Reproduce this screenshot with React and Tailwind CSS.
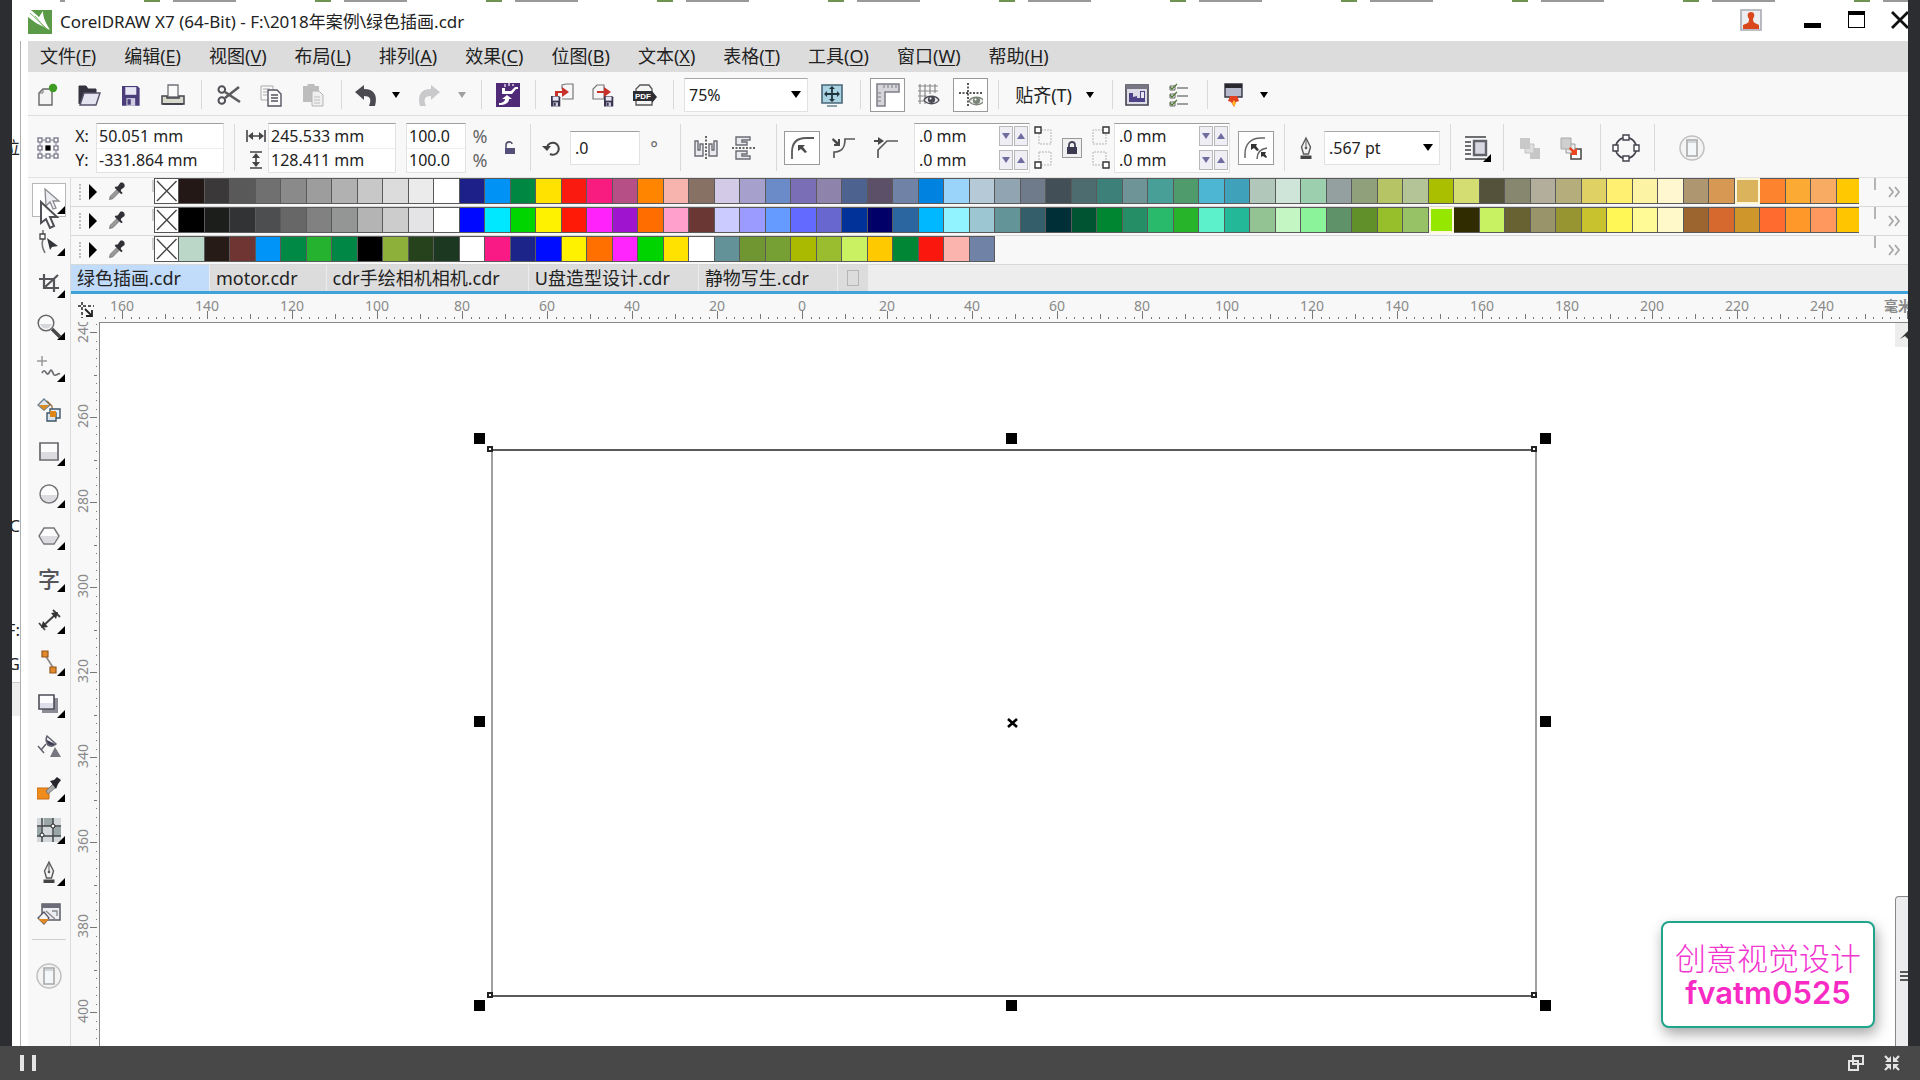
import React from "react";

const FONT = "font-['Noto_Sans','Noto_Sans_CJK_SC',sans-serif]";

/* ---------- data ---------- */

const MENUS = [
  ["文件", "F"], ["编辑", "E"], ["视图", "V"], ["布局", "L"], ["排列", "A"], ["效果", "C"],
  ["位图", "B"], ["文本", "X"], ["表格", "T"], ["工具", "O"], ["窗口", "W"], ["帮助", "H"],
];

const TABS = ["绿色插画.cdr", "motor.cdr", "cdr手绘相机相机.cdr", "U盘造型设计.cdr", "静物写生.cdr"];

const PALETTES = [
  {
    selected: 61,
    colors:
      "231815 3a3838 595959 707070 8a8a8a 9c9d9c b1b1b1 c8c8c8 dcdcdc ebebeb ffffff 1d2088 0093f5 008742 ffe200 fa1a0f f81b80 b54f86 ff8500 f7b4ae 877064 d2cae7 a6a0cd 6a8bc8 7a6fb6 8e84ab 4d628f 5b5068 7082a6 0082e0 9bd4fa b6c9d6 90a4b2 6f7b8a 434f57 4d6c70 3d7f79 6e9497 489f98 4f9b6b 4db6d2 3fa2ba b0c7b9 cfe5da 9ccfae 949fa0 8fa07a b7c466 b5c497 a9bf00 d3dd72 55523c 87866f b3ae9b b5ae7c dfd163 fff071 fcf3a5 fff7d0 ae9770 d79853 dcb35d fe832f fbaa33 f8ab62 ffc800",
  },
  {
    selected: 49,
    colors:
      "000000 1c1e1b 323334 4c4e4f 676767 808180 949696 b3b4b3 cccccc e4e4e6 ffffff 0008ff 00e8ff 00d500 fff200 ff1a08 ff22fb 9e14cf ff6c00 ff9fcb 6b3735 cbcbff 9b9aff 659aff 636aff 6867cf 003299 000068 2b66a1 00b8ff 91f3ff 9bc6d2 639498 345e69 002f38 005432 008631 268e66 29bb6b 27b42b 5cf0cb 23b898 93c393 c4f6c4 8bf49b 5f9268 618f2a 97bf2c 97c265 95e700 302c00 c9f262 686232 99946a 979532 c7c22e fff756 fff996 fff8c8 9c642f d66a2e ce962b ff6b2e ff9829 ff985f ffc600",
  },
  {
    selected: -1,
    colors:
      "bbd7c8 261b16 6f3532 0093f8 008845 25b32f 008745 000000 8db03b 25421d 1d3820 ffffff fa1a86 1c2389 000cff fff200 ff7000 ff25fc 00d400 ffe200 ffffff 639399 6f9630 769f34 aaba00 9abd2f caf161 ffc900 008634 fa170e fbb4ae 7083a7",
  },
];

/* ---------- icons ---------- */

const D = "#6a6a80";

function Svg({ children, size = "h-6 w-6", box = "0 0 24 24" }) {
  return (
    <svg viewBox={box} className={`${size} shrink-0`} fill="none" aria-hidden="true">
      {children}
    </svg>
  );
}

const floppy = (x, y, s, c = "#4a3d7a") => (
  <g transform={`translate(${x} ${y}) scale(${s})`}>
    <path d="M0 0h14l2 2v16H0z" fill={c} />
    <path d="M3 1h10v7H3z" fill="#e9e6f3" />
    <path d="M4 11h8v7H4z" fill="#cfcbe0" />
    <path d="M5 12h3v5H5z" fill={c} />
  </g>
);

const nib = (
  <>
    <path d="M12 2l4.5 9-2 7h-5l-2-7z" fill="#f2f2f2" stroke="#5a5a5a" strokeWidth="1.4" />
    <path d="M12 4v8" stroke="#5a5a5a" strokeWidth="1" />
    <circle cx="12" cy="12" r="1.3" fill="#5a5a5a" />
    <path d="M6.5 19.5h11V23h-11z" fill="#444" />
  </>
);

const dropper = (
  <>
    <path d="M3 21l1-4 9-9 3 3-9 9z" fill="#9a9a9a" stroke="#6e6e6e" />
    <path d="M11 6l2-1 3-4c3-1 6 1 5 5l-4 3-1 3z" fill="#303036" />
    <path d="M10 6l8 8" stroke="#303036" strokeWidth="2.4" />
  </>
);

const eye = (x, y, c = "#4a4a52") => (
  <g transform={`translate(${x} ${y})`}>
    <path d="M0 6c3-5 12-5 15 0-3 5-12 5-15 0z" fill="#eee" stroke={c} strokeWidth="1.4" />
    <circle cx="7.5" cy="5.5" r="3.6" fill={c} />
    <circle cx="6.5" cy="4.5" r="1" fill="#fff" />
  </g>
);

const docCircle = (
  <Svg size="h-7 w-7" box="0 0 28 28">
    <circle cx="14" cy="14" r="12" stroke="#c0c0c0" strokeWidth="1.5" fill="#f4f4f4" />
    <path d="M9 6h10v16H9z" fill="#f3f7fa" stroke="#a8a8a8" strokeWidth="1.6" />
    <path d="M9 8h10" stroke="#b5b5b5" />
  </Svg>
);

const I = {
  logo: (
    <Svg>
      <path d="M0 0h24v24H0z" fill="#5b9b48" />
      <path d="M0 0h3l8 7 4-6c0 5 1 9 7 19L8 13 0 7z" fill="#fff" />
      <path d="M2 3l17 16M7 6l10 12" stroke="#7db46b" strokeWidth="1" />
    </Svg>
  ),
  fresh: (
    <Svg>
      <path d="M3 22V10l4-4h9v16z" fill="#f4f4f4" stroke="#666" strokeWidth="1.4" />
      <path d="M3 10h4V6" stroke="#777" />
      <circle cx="17" cy="5" r="4.2" fill="#3f9b24" />
    </Svg>
  ),
  open: (
    <Svg>
      <path d="M2 21V3h7l2 3h8v4" fill="#34323f" stroke="#34323f" />
      <path d="M3 22l4-12h16l-4 12z" fill="#e4e4f1" stroke="#54516a" strokeWidth="1.4" />
    </Svg>
  ),
  save: <Svg>{floppy(3, 3, 1.1)}</Svg>,
  print: (
    <Svg>
      <path d="M7 2h10v12H7z" fill="#fafafa" stroke="#707078" strokeWidth="1.3" />
      <path d="M1 13h5v2h12v-2h5v8H1z" fill="#d8d8cc" stroke="#44444c" strokeWidth="1.5" />
      <path d="M2 21h20" stroke="#44444c" strokeWidth="2" />
    </Svg>
  ),
  cut: (
    <Svg>
      <path d="M8 9l15 10M8 15L22 4" stroke="#5b5b60" strokeWidth="2.6" />
      <circle cx="4.8" cy="6.5" r="3.3" stroke="#505058" strokeWidth="2" />
      <circle cx="4.8" cy="17.5" r="3.3" stroke="#505058" strokeWidth="2" />
    </Svg>
  ),
  copy: (
    <Svg>
      <path d="M2 3h12v14H2z" fill="#fafafa" stroke="#aaa" />
      <path d="M4 6h7M4 9h4M4 12h4" stroke="#aaa" />
      <path d="M9 7h9l4 4v12H9z" fill="#fafafa" stroke="#555562" strokeWidth="1.4" />
      <path d="M12 12h7M12 15h7M12 18h7" stroke="#555562" strokeWidth="1.3" />
    </Svg>
  ),
  paste: (
    <Svg>
      <path d="M2 3h4l1-2h6l1 2h4v16H2z" fill="#bdbdbd" />
      <path d="M11 8h7l4 4v11H11z" fill="#efefef" stroke="#b5b5b5" />
      <path d="M13 14h6M13 17h6M13 20h6" stroke="#bdbdbd" />
    </Svg>
  ),
  undo: (
    <Svg>
      <path d="M1 9l9-7v4c10 0 14 6 11 17h-6c3-7 1-10-5-10v4z" fill="#4a4a50" />
    </Svg>
  ),
  redo: (
    <Svg>
      <path d="M23 9l-9-7v4C4 6 0 12 3 23h6c-3-7-1-10 5-10v4z" fill="#c9c9cb" />
    </Svg>
  ),
  connect: (
    <Svg>
      <path d="M0 0h24v24H0z" fill="#4f2a76" />
      <path d="M9 1v3M13 0v3M17 1v2" stroke="#fff" strokeWidth="1.2" />
      <path d="M6 5h3v3h6l4-4h3v2h-2l-4 5H6z" fill="#fff" />
      <path d="M3 22v-2c4 0 6-2 6-4H6l5-4 5 4h-3c0 4-4 6-10 6z" fill="#fff" />
    </Svg>
  ),
  imp: (
    <Svg>
      <path d="M12 6V2l4-1h7v15H12" fill="#f6f6f6" stroke="#777" strokeWidth="1.2" />
      {floppy(1, 13, 0.58, "#38364e")}
      <path d="M5 8h7V4l7 5-7 5v-4H8v3H5z" fill="#c9302a" />
    </Svg>
  ),
  exp: (
    <Svg>
      <path d="M2 16V6l4-4h7v14z" fill="#f6f6f6" stroke="#777" strokeWidth="1.2" />
      {floppy(13, 13, 0.58, "#38364e")}
      <path d="M6 8h7V4l7 5-7 5v-4H6z" fill="#c9302a" />
    </Svg>
  ),
  pdf: (
    <Svg>
      <path d="M3 22V6l4-4h9l3 4v16z" fill="#f6f6f6" stroke="#555" strokeWidth="1.3" />
      <path d="M0 8h19l5 6-5 6v-2H0z" fill="#2e2e35" />
      <text x="2" y="16" fontSize="8" fontWeight="700" fill="#fff" className="font-['Liberation_Sans',sans-serif]">PDF</text>
    </Svg>
  ),
  screen: (
    <Svg>
      <path d="M2 2h20v18H2z" fill="#a9d2e2" stroke="#4a6677" strokeWidth="1.6" />
      <path d="M12 5v12M5 11h14" stroke="#20333d" strokeWidth="1.8" />
      <path d="M12 3l3 3H9zM12 19l3-3H9zM4 11l3-3v6zM20 11l-3-3v6z" fill="#20333d" />
      <path d="M7 23h10" stroke="#6f8b99" strokeWidth="1.6" />
    </Svg>
  ),
  ruler: (
    <Svg>
      <path d="M1 1h22v8H9v14H1z" fill="#d5d5da" stroke="#7d7d86" strokeWidth="1.5" />
      <path d="M8 2v3M12 2v3M16 2v3M20 2v3M2 10h3M2 14h3M2 18h3" stroke="#7d7d86" />
    </Svg>
  ),
  grid: (
    <Svg>
      <path d="M1 3h20M1 8h20M1 13h9M1 18h8M3 1v20M8 1v20M13 1v10M18 1v9" stroke="#8a8a8a" strokeWidth="1.2" />
      {eye(7, 11)}
    </Svg>
  ),
  guides: (
    <Svg>
      <path d="M0 10h24M9 0v24" stroke="#222" strokeWidth="1.5" strokeDasharray="2 1.5" />
      {eye(10, 12, "#7a8577")}
    </Svg>
  ),
  welcome: (
    <Svg>
      <path d="M1 2h22v20H1z" fill="#dcdce6" stroke="#43434d" strokeWidth="1.6" />
      <path d="M1 2h22v4H1z" fill="#777783" />
      <path d="M4 19v-9h4v4l4-1v2h3V8h5v11z" fill="#4f4388" />
      <path d="M16 9h3v6h-3z" fill="#e9e9f2" />
    </Svg>
  ),
  options: (
    <Svg>
      <path d="M10 5h11M10 13h11M10 21h11" stroke="#808080" strokeWidth="1.5" />
      <path d="M3 3h5v4H3zM3 11h5v4H3zM3 19h5v4H3z" stroke="#666" />
      <path d="M3 4l2 2 5-5M3 12l2 2 5-5M3 20l2 2 5-5" stroke="#4d7a33" strokeWidth="1.3" />
    </Svg>
  ),
  launch: (
    <Svg>
      <path d="M3 1h17v13H3z" fill="#b6b8cb" stroke="#353540" strokeWidth="1.4" />
      <path d="M3 1h17v4H3z" fill="#28282e" />
      <path d="M8 13h7l2 5-3 1-2 5-3-5-3-1z" fill="#e2401f" />
      <path d="M12 17l2 3-2 4-2-4z" fill="#ffb52b" />
    </Svg>
  ),
  origin: (
    <Svg>
      {[2, 10, 18].map((y) =>
        [2, 10, 18].map((x) => (
          <rect key={`${x}-${y}`} x={x} y={y} width="4" height="4" fill={x === 10 && y === 10 ? "#000" : "#fff"} stroke={x === 10 && y === 10 ? "#000" : D} strokeWidth="1.2" />
        ))
      )}
      <path d="M7 4h2M15 4h2M7 20h2M15 20h2M4 7v2M4 15v2M20 7v2M20 15v2" stroke={D} />
    </Svg>
  ),
  width: (
    <Svg size="h-5 w-5" box="0 0 20 20">
      <path d="M1 4v12M19 4v12M4 10h12" stroke="#444" strokeWidth="1.6" />
      <path d="M2 10l5-4v8zM18 10l-5-4v8z" fill="#444" />
    </Svg>
  ),
  height: (
    <Svg size="h-5 w-5" box="0 0 20 20">
      <path d="M4 2h12M4 18h12M10 4v12" stroke="#444" strokeWidth="1.6" />
      <path d="M10 3l-4 5h8zM10 17l-4-5h8z" fill="#444" />
    </Svg>
  ),
  unlock: (
    <Svg size="h-4 w-4" box="0 0 16 16">
      <path d="M4 8V5c0-4 6-4 6-1" stroke="#56526f" strokeWidth="1.6" />
      <path d="M3 8h10v6H3z" fill="#55507a" />
    </Svg>
  ),
  rotate: (
    <Svg size="h-5 w-5" box="0 0 20 20">
      <path d="M5 9a6 6 0 1 1 3 7" stroke="#444" strokeWidth="2" />
      <path d="M0 8h9l-4 5z" fill="#444" />
    </Svg>
  ),
  mirrorH: (
    <Svg>
      <path d="M12 0v24" stroke="#333" strokeWidth="1.5" strokeDasharray="2 1.5" />
      <path d="M1 5h3v9h2V8h3v12H1zM23 5h-3v9h-2V8h-3v12h8z" fill="#e9e9ee" stroke="#6b6b74" strokeWidth="1.4" />
    </Svg>
  ),
  mirrorV: (
    <Svg>
      <path d="M0 12h24" stroke="#333" strokeWidth="1.5" strokeDasharray="2 1.5" />
      <path d="M4 1h14v3h-8v2h5v3H4zM4 23h14v-3h-8v-2h5v-3H4z" fill="#e9e9ee" stroke="#6b6b74" strokeWidth="1.4" />
    </Svg>
  ),
  round: (
    <Svg>
      <path d="M2 23v-7C2 6 8 2 16 2h8" stroke="#5a5a5a" strokeWidth="1.8" />
      <path d="M8 9h7l-2 2 4 5-2 1-4-4-3 2z" fill="#4a4a4a" />
    </Svg>
  ),
  scallop: (
    <Svg>
      <path d="M2 22v-6c8 0 11-4 11-13h10" stroke="#5a5a5a" strokeWidth="1.7" />
      <path d="M1 2l5 4V3h2v7H2V8h2L0 4z" fill="#4a4a4a" />
    </Svg>
  ),
  chamfer: (
    <Svg>
      <path d="M4 22v-8l9-9h11" stroke="#5a5a5a" strokeWidth="1.7" />
      <path d="M0 4h4V1l6 4-6 4V6H0z" fill="#4a4a4a" />
    </Svg>
  ),
  cornersL: (
    <Svg size="h-11 w-5" box="0 0 20 44">
      <path d="M7 4h10v14H5V8M5 26h12v13H8M5 26v10" stroke="#b5b5b5" strokeDasharray="2 1" />
      <path d="M1 1h6v6H1zM1 36h6v6H1z" fill="#fff" stroke="#333" strokeWidth="1.4" />
    </Svg>
  ),
  cornersR: (
    <Svg size="h-11 w-5" box="0 0 20 44">
      <path d="M13 4H3v14h13V8M13 39H3V26h13v10" stroke="#b5b5b5" strokeDasharray="2 1" />
      <path d="M13 1h6v6h-6zM13 36h6v6h-6z" fill="#fff" stroke="#333" strokeWidth="1.4" />
    </Svg>
  ),
  lock: (
    <Svg size="h-4 w-4" box="0 0 16 16">
      <path d="M5 7V5c0-4 6-4 6 0v2" stroke="#45435a" strokeWidth="1.8" />
      <path d="M3 7h10v7H3z" fill="#3c3a50" />
    </Svg>
  ),
  relative: (
    <Svg>
      <path d="M1 22v-4C1 8 7 2 17 2h4M13 23c0-6 3-10 10-11" stroke="#666" strokeWidth="1.5" />
      <path d="M7 8h6l-1 2 3 4-2 1-3-3-3 2zM17 16h5l-1 2 2 3-1 1-3-2-2 1z" fill="#333" />
    </Svg>
  ),
  nib: <Svg>{nib}</Svg>,
  wrap: (
    <Svg size="h-7 w-7" box="0 0 28 28">
      <path d="M1 3h21M1 8h6M1 12h6M1 16h6M1 20h6M1 25h21" stroke="#3f3f46" strokeWidth="1.6" />
      <path d="M10 7h12v14H10z" fill="#d6d7e0" stroke="#62626c" strokeWidth="2.4" />
      <path d="M27 20v8h-8z" fill="#000" />
    </Svg>
  ),
  toFront: (
    <Svg>
      <path d="M12 12h10v11H12z" fill="#c6c6c6" />
      <path d="M7 8h9v9H7z" fill="#dedede" stroke="#c4c4c4" />
      <path d="M2 2h10v11H2z" fill="#c9c9c9" />
    </Svg>
  ),
  toBack: (
    <Svg>
      <path d="M12 13h10v10H12z" fill="#fff" stroke="#444" strokeWidth="1.5" />
      <path d="M7 8h9v9H7z" fill="#ececec" stroke="#999" />
      <path d="M2 2h10v11H2z" fill="#cfcfcf" stroke="#aaa" />
      <path d="M11 11l4 3 3-2v7h-7l2-3-3-3z" fill="#e8471f" />
    </Svg>
  ),
  curves: (
    <Svg size="h-7 w-7" box="0 0 28 28">
      <circle cx="14" cy="14" r="10.5" stroke="#42424d" strokeWidth="1.6" />
      <path d="M11 1h6v5h-6zM11 22h6v5h-6zM1 11h5v6H1zM22 11h5v6h-5z" fill="#fff" stroke="#42424d" strokeWidth="1.4" />
    </Svg>
  ),
};

const TOOLS = [
  ["选择工具", 1, <Svg key="a"><path d="M8 1l1 17 4-4 3 7 3-1-3-7h6z" fill="#eceef1" stroke="#8a8a90" strokeWidth="1.3" /></Svg>],
  ["形状工具", 1, <Svg key="b"><path d="M6 0v4M6 9c-2 6 0 10 2 14" stroke="#777" strokeWidth="1.6" /><path d="M3 4h5v5H3z" fill="#fff" stroke="#444" strokeWidth="1.3" /><path d="M10 8l11 8-6 1-2 3z" fill="#33333a" /></Svg>],
  ["裁剪工具", 1, <Svg key="c"><path d="M2 7h15v13M7 2v14h15M7 16L21 3" stroke="#55555a" strokeWidth="2.2" /></Svg>],
  ["缩放工具", 1, <Svg key="d"><path d="M15 15l8 8" stroke="#48484c" strokeWidth="3.4" /><circle cx="9" cy="9" r="7.8" fill="#fafafa" stroke="#66666a" strokeWidth="1.5" /><path d="M3 10h12c-2 6-10 6-12 0z" fill="#d5d7da" /></Svg>],
  ["手绘工具", 1, <Svg key="e"><path d="M5 0v10M0 5h10" stroke="#999" strokeWidth="1.5" /><path d="M5 17c3-6 4 2 6 1s2-6 4-3 1 5 4 4 2-2 4-1" stroke="#6a6a70" strokeWidth="1.7" /></Svg>],
  ["智能填充工具", 0, <Svg key="f"><path d="M1 7l6-6 6 6-6 5z" fill="#dfe7ee" stroke="#70808c" strokeWidth="1.4" /><path d="M2 7h10l-5 5z" fill="#dd8a20" /><path d="M10 3l5 5v4" stroke="#9a6a30" strokeWidth="1.3" /><path d="M13 11h10v9H13z" fill="#e3edf5" stroke="#3e566a" strokeWidth="1.4" /><path d="M10 15h9v8h-9z" fill="#d6e4ee" stroke="#3e566a" strokeWidth="1.4" /><path d="M13 13h6v6h-6z" fill="#e08518" /></Svg>],
  ["矩形工具", 1, <Svg key="g"><path d="M3 3h18v17H3z" fill="#fcfcfc" stroke="#66666c" strokeWidth="1.7" /><path d="M4 12h16v7H4z" fill="#dcdce0" /></Svg>],
  ["椭圆形工具", 1, <Svg key="h"><circle cx="12" cy="12" r="9" fill="#fcfcfc" stroke="#77777c" strokeWidth="1.5" /><path d="M4 13h16c-2 9-14 9-16 0z" fill="#dcdce0" /></Svg>],
  ["多边形工具", 1, <Svg key="i"><path d="M7 4h10l5 8-5 8H7l-5-8z" fill="#fcfcfc" stroke="#77777c" strokeWidth="1.5" /><path d="M3 12h18l-4 7H7z" fill="#dcdce0" /></Svg>],
  ["文本工具", 1, <span key="j" className="text-[22px] leading-6 font-medium text-[#55555a]">字</span>],
  ["平行度量工具", 1, <Svg key="k"><path d="M5 19L20 5" stroke="#444" strokeWidth="2" /><path d="M2 15l6 7M16 2l7 7" stroke="#444" strokeWidth="1.8" /><path d="M4 20l2-7 5 6zM21 4l-2 7-5-6z" fill="#333" /></Svg>],
  ["直线连接器工具", 1, <Svg key="l"><path d="M8 5l9 14" stroke="#888" strokeWidth="1.6" /><path d="M5 1h6v6H5zM13 17h6v6h-6z" fill="#e58a2c" stroke="#96551a" strokeWidth="1.2" /></Svg>],
  ["阴影工具", 1, <Svg key="m"><path d="M5 6h16v15H5z" fill="#8c8c96" /><path d="M2 3h15v14H2z" fill="#fcfcff" stroke="#4c4c58" strokeWidth="1.6" /><path d="M3 11h13v5H3z" fill="#dedeea" /></Svg>],
  ["透明度工具", 0, <Svg key="n"><path d="M10 2l9 8c-3 3-8 3-9-1-1-2-1-5 0-7zM9 10l-5 6M1 12l6 7" stroke="#62626e" strokeWidth="1.5" /><path d="M10 6l8 4c-3 3-8 2-8-4z" fill="#3e3e55" /><path d="M18 13l6 10H13z" fill="#77777f" /></Svg>],
  ["颜色滴管工具", 1, <Svg key="o"><path d="M0 12h12v11H0z" fill="#f08c1c" stroke="#c56d10" /><path d="M9 15l7-7 3 3-8 7z" fill="#aaa" stroke="#777" /><path d="M13 5l4-1 3-3 4 3-3 4-2 5z" fill="#26262c" /></Svg>],
  ["网状填充工具", 1, <Svg key="p"><path d="M0 0h24v24H0z" fill="#d3d7d9" /><path d="M7 0h9v8H7zM17 9h7v9h-7zM0 9h4v8H0z" fill="#9aa5a7" /><path d="M0 8h24M0 18h24M5 0v24M16 0v24" stroke="#43484a" strokeWidth="1.5" /><circle cx="16" cy="8" r="2" fill="#fff" stroke="#222" /><circle cx="5" cy="17" r="2" fill="#fff" stroke="#222" /></Svg>],
  ["轮廓笔", 1, <Svg key="q">{nib}</Svg>],
  ["编辑填充", 0, <Svg key="r"><path d="M5 2h18v16H5z" fill="#ededf4" stroke="#5c5c66" strokeWidth="1.5" /><path d="M5 2h18v4H5z" fill="#6c6c78" /><path d="M9 9l9 8M15 9h5v5" stroke="#888" strokeWidth="1.3" /><path d="M1 16l6-6 5 6-5 6z" fill="#f5f5f5" stroke="#556" strokeWidth="1.2" /><path d="M1 17h11l-5 5z" fill="#e08a25" /></Svg>],
];

/* ---------- small parts ---------- */

function IconButton({ label, w = "w-[42px]", children }) {
  return (
    <button type="button" aria-label={label} className={`${w} flex h-full shrink-0 items-center justify-center`}>
      {children}
    </button>
  );
}

function Pressed({ label, w = "w-[35px]", children }) {
  return (
    <button type="button" aria-label={label} className={`${w} flex h-[34px] shrink-0 items-center justify-center border border-[#9a9a9a] bg-white`}>
      {children}
    </button>
  );
}

function Sep({ w = "w-3.5" }) {
  return (
    <div className={`${w} flex h-full shrink-0 justify-center py-1.5`}>
      <div className="w-px bg-[#d9d9d9]" />
    </div>
  );
}

function Caret({ color = "border-t-black" }) {
  return <span className={`h-0 w-0 border-x-4 border-t-[6px] border-x-transparent ${color}`} />;
}

function CaretButton({ label, w = "w-6", color }) {
  return (
    <IconButton label={label} w={w}>
      <Caret color={color} />
    </IconButton>
  );
}

function Combo({ label, value, w, h }) {
  return (
    <div className={`relative ${w} ${h} shrink-0 border border-[#e2e2e2] border-t-[#a8a8a8] bg-white`}>
      <select aria-label={label} className="h-full w-full appearance-none bg-transparent pl-1 text-base leading-5">
        <option>{value}</option>
      </select>
      <span className="pointer-events-none absolute inset-y-0 right-1.5 flex items-center">
        <span className="h-0 w-0 border-x-[5px] border-t-[7px] border-x-transparent border-t-black" />
      </span>
    </div>
  );
}

function FieldPair({ w, items }) {
  return (
    <div className={`${w} shrink-0 border border-[#e2e2e2] border-t-[#9f9f9f] bg-white`}>
      {items.map(([label, value], i) => (
        <input key={label} aria-label={label} defaultValue={value} className={`block h-6 w-full bg-transparent pl-0.5 text-base leading-6 ${i ? "border-t border-[#ececec]" : ""}`} />
      ))}
    </div>
  );
}

function SpinPair({ labels }) {
  return (
    <div className="w-[116px] shrink-0 border border-[#e2e2e2] border-t-[#9f9f9f] bg-white">
      {labels.map((label) => (
        <div key={label} className="flex h-6 items-center gap-px pr-px">
          <input aria-label={label} defaultValue=".0 mm" className="h-6 min-w-0 flex-1 bg-transparent pl-1 text-base leading-6" />
          <button type="button" aria-label={`${label} −`} className="flex h-5 w-3.5 items-center justify-center border border-[#b8b8b8] bg-[#eeeef4]">
            <span className="h-0 w-0 border-x-4 border-t-[6px] border-x-transparent border-t-[#6f6da0]" />
          </button>
          <button type="button" aria-label={`${label} +`} className="flex h-5 w-3.5 items-center justify-center border border-[#b8b8b8] bg-[#eeeef4]">
            <span className="h-0 w-0 border-x-4 border-b-[6px] border-x-transparent border-b-[#6f6da0]" />
          </button>
        </div>
      ))}
    </div>
  );
}

/* ---------- sections ---------- */

function TitleBar() {
  return (
    <header className="flex h-[41px] shrink-0 items-center overflow-hidden bg-white pt-0.5">
      {I.logo}
      <h1 className="ml-2 flex-1 text-[17px] leading-6 whitespace-nowrap">CorelDRAW X7 (64-Bit) - F:\2018年案例\绿色插画.cdr</h1>
      <button type="button" aria-label="用户" className="mb-1 flex w-[22px] justify-center">
        <Svg size="h-[22px] w-[22px]" box="0 0 22 22">
          <path d="M1 1h20v20H1z" fill="#eceef2" stroke="#a9abb2" strokeWidth="1.6" />
          <path d="M11 3c4 0 4 4 2 7 0 4 2 4 6 6v4H3v-4c5-2 6-2 6-6C7 7 7 3 11 3z" fill="#d8481c" />
        </Svg>
      </button>
      <button type="button" aria-label="最小化" className="mb-1 ml-10 flex h-4 w-5 items-end justify-center">
        <span className="h-[5px] w-[17px] bg-black" />
      </button>
      <button type="button" aria-label="最大化" className="mb-1 ml-6 flex w-5 justify-center">
        <span className="h-[17px] w-[17px] border border-t-4 border-black" />
      </button>
      <button type="button" aria-label="关闭" className="-mr-0.5 mb-1 ml-6 flex w-5 justify-center">
        <Svg size="h-[18px] w-5" box="0 0 20 18">
          <path d="M2 1l16 16M18 1L2 17" stroke="#111" strokeWidth="2.8" />
        </Svg>
      </button>
    </header>
  );
}

function MenuBar() {
  return (
    <nav className="flex h-[31px] shrink-0 items-center gap-7 bg-[#dcdcdc] pb-0.5 pl-3">
      {MENUS.map(([name, key]) => (
        <button key={name} type="button" className="text-lg leading-7 whitespace-nowrap">
          {name}(<span className="underline underline-offset-2">{key}</span>)
        </button>
      ))}
    </nav>
  );
}

function StandardBar() {
  return (
    <div role="toolbar" aria-label="标准" className="flex h-11 shrink-0 items-center border-b border-[#dedede] bg-[#f8f8f8] pt-0.5">
      <IconButton label="新建" w="w-10">{I.fresh}</IconButton>
      <IconButton label="打开">{I.open}</IconButton>
      <IconButton label="保存">{I.save}</IconButton>
      <IconButton label="打印">{I.print}</IconButton>
      <Sep />
      <IconButton label="剪切">{I.cut}</IconButton>
      <IconButton label="复制">{I.copy}</IconButton>
      <IconButton label="粘贴">{I.paste}</IconButton>
      <Sep />
      <IconButton label="撤消" w="w-9">{I.undo}</IconButton>
      <CaretButton label="撤消列表" />
      <IconButton label="重做">{I.redo}</IconButton>
      <CaretButton label="重做列表" color="border-t-[#a0a0a0]" />
      <Sep />
      <IconButton label="搜索内容" w="w-10">{I.connect}</IconButton>
      <Sep />
      <IconButton label="导入" w="w-10">{I.imp}</IconButton>
      <IconButton label="导出">{I.exp}</IconButton>
      <IconButton label="发布为 PDF">{I.pdf}</IconButton>
      <Sep />
      <div className="ml-1 flex">
        <Combo label="缩放级别" value="75%" w="w-[124px]" h="h-[34px]" />
      </div>
      <IconButton label="全屏预览" w="w-12">{I.screen}</IconButton>
      <Sep w="w-2" />
      <div className="ml-1.5 flex items-center">
        <Pressed label="显示标尺">{I.ruler}</Pressed>
        <IconButton label="显示网格" w="w-12">{I.grid}</IconButton>
        <Pressed label="显示辅助线">{I.guides}</Pressed>
      </div>
      <Sep w="w-5" />
      <button type="button" className="flex w-16 shrink-0 justify-end text-lg leading-7 whitespace-nowrap">贴齐(T)</button>
      <CaretButton label="贴齐列表" w="w-9" />
      <Sep w="w-2" />
      <IconButton label="欢迎屏幕">{I.welcome}</IconButton>
      <IconButton label="选项">{I.options}</IconButton>
      <Sep />
      <IconButton label="应用程序启动器" w="w-10">{I.launch}</IconButton>
      <CaretButton label="启动器列表" w="w-5" />
    </div>
  );
}

function PropertyBar() {
  return (
    <div role="toolbar" aria-label="属性栏" className="flex h-[62px] shrink-0 items-center border-b border-[#e2e2e2] bg-[#f8f8f8] pt-0.5 text-base">
      <IconButton label="对象原点" w="w-10">{I.origin}</IconButton>
      <div className="flex w-7 shrink-0 flex-col items-center leading-6">
        <span>X:</span>
        <span>Y:</span>
      </div>
      <FieldPair w="w-32" items={[["X", "50.051 mm"], ["Y", "-331.864 mm"]]} />
      <Sep w="w-5" />
      <div className="flex w-6 shrink-0 flex-col items-center gap-1">
        {I.width}
        {I.height}
      </div>
      <FieldPair w="w-32" items={[["宽度", "245.533 mm"], ["高度", "128.411 mm"]]} />
      <div className="ml-2.5 flex">
        <FieldPair w="w-15" items={[["水平缩放", "100.0"], ["垂直缩放", "100.0"]]} />
      </div>
      <div className="flex w-7 shrink-0 flex-col items-center text-lg leading-6 text-[#666]">
        <span>%</span>
        <span>%</span>
      </div>
      <IconButton label="锁定比率" w="w-8">{I.unlock}</IconButton>
      <Sep w="w-2" />
      <span className="flex w-9 shrink-0 justify-center">{I.rotate}</span>
      <input aria-label="旋转角度" defaultValue=".0" className="h-[34px] w-[70px] shrink-0 border border-[#e2e2e2] border-t-[#9f9f9f] bg-white pl-1" />
      <span className="flex w-7 shrink-0 justify-center text-lg text-[#666]">°</span>
      <Sep w="w-6" />
      <IconButton label="水平镜像" w="w-7">{I.mirrorH}</IconButton>
      <IconButton label="垂直镜像" w="w-12">{I.mirrorV}</IconButton>
      <Sep w="w-4" />
      <Pressed label="圆角" w="w-9">{I.round}</Pressed>
      <IconButton label="扇形角" w="w-12">{I.scallop}</IconButton>
      <IconButton label="倒棱角" w="w-9">{I.chamfer}</IconButton>
      <div className="ml-2.5 flex">
        <SpinPair labels={["左上转角半径", "左下转角半径"]} />
      </div>
      <span className="flex w-7 shrink-0 justify-center">{I.cornersL}</span>
      <div className="flex w-7 shrink-0 justify-center">
        <button type="button" aria-label="同时编辑所有角" className="flex h-5 w-5 items-center justify-center border border-[#999] bg-[#f0f0f0]">{I.lock}</button>
      </div>
      <span className="flex w-7 shrink-0 justify-center">{I.cornersR}</span>
      <SpinPair labels={["右上转角半径", "右下转角半径"]} />
      <div className="ml-2 flex">
        <Pressed label="相对角缩放" w="w-9">{I.relative}</Pressed>
      </div>
      <Sep w="w-5" />
      <span className="flex w-6 shrink-0 justify-center">{I.nib}</span>
      <div className="ml-1.5 flex">
        <Combo label="轮廓宽度" value=".567 pt" w="w-[116px]" h="h-[34px]" />
      </div>
      <Sep w="w-5" />
      <IconButton label="文本换行" w="w-9">{I.wrap}</IconButton>
      <Sep />
      <IconButton label="到图层前面" w="w-10">{I.toFront}</IconButton>
      <IconButton label="到图层后面">{I.toBack}</IconButton>
      <Sep w="w-4" />
      <IconButton label="转换为曲线" w="w-9">{I.curves}</IconButton>
      <Sep w="w-5" />
      <IconButton label="快速自定义" w="w-14">{docCircle}</IconButton>
    </div>
  );
}

function Toolbox() {
  return (
    <aside role="toolbar" aria-label="工具箱" className="flex w-[43px] shrink-0 flex-col border-r border-[#dcdcdc] bg-[#f8f8f8] pt-px">
      {TOOLS.map(([label, flyout, icon], i) => (
        <button
          key={label}
          type="button"
          aria-label={label}
          className={`relative flex h-[42px] shrink-0 items-center justify-center before:absolute before:inset-x-1 before:inset-y-1 ${i === 0 ? "before:border before:border-[#b8b8b8] before:bg-white" : ""}`}
        >
          <span className="relative flex">{icon}</span>
          {flyout ? <span className="absolute right-[5px] bottom-[7px] h-0 w-0 border-b-8 border-l-8 border-b-black border-l-transparent" /> : null}
          {i === 0 ? (
            <span className="absolute top-[21px] left-[11px] z-10 flex">
              <Svg size="h-[30px] w-5" box="0 0 20 30">
                <path d="M2 2v21l5-4 4 9 4-2-4-9h7z" fill="#fff" stroke="#505056" strokeWidth="2" />
              </Svg>
            </span>
          ) : null}
        </button>
      ))}
      <div className="mx-1 mt-1 h-px bg-[#cfcfcf]" />
      <button type="button" aria-label="快速自定义" className="mt-[22px] flex justify-center">{docCircle}</button>
    </aside>
  );
}

function PaletteRow({ palette }) {
  return (
    <div className="flex h-[29px] shrink-0 border-b border-[#d8d8d8]">
      <div className="flex w-[83px] shrink-0 items-center">
        <span className="ml-2 h-4 w-0.5 border-l-2 border-dotted border-[#bdbdbd]" />
        <button type="button" aria-label="调色板菜单" className="ml-2 flex">
          <span className="h-0 w-0 border-y-8 border-l-8 border-y-transparent border-l-black" />
        </button>
        <button type="button" aria-label="滴管" className="ml-2.5 flex">
          <Svg size="h-5 w-5">{dropper}</Svg>
        </button>
        <span className="mb-3 ml-auto h-3 w-0.5 bg-[#cfcfcf]" />
      </div>
      <div className="min-w-0 flex-1 overflow-hidden">
        <div className="-mr-[3px] grid h-[26px] grid-cols-[repeat(67,minmax(0,1fr))]">
          <button type="button" aria-label="无填充" className="border border-[#555] bg-white">
            <svg viewBox="0 0 24 24" className="h-full w-full" preserveAspectRatio="none" aria-hidden="true">
              <path d="M2 2l20 20M22 2L2 22" stroke="#444" strokeWidth="1.4" />
            </svg>
          </button>
          {palette.colors.split(" ").map((c, i) => (
            <button
              key={i}
              type="button"
              aria-label={`#${c}`}
              className={i === palette.selected ? "border-2 border-[#fff7d5]" : "border-y border-r border-[#5a5a5a]"}
              style={{ backgroundColor: `#${c}` }}
            />
          ))}
        </div>
      </div>
      <div className="flex w-[49px] shrink-0 justify-end gap-2.5 pr-1.5">
        <span className="h-3 w-0.5 bg-[#b5b5b5]" />
        <button type="button" aria-label="更多颜色" className="flex w-4 items-center justify-center">
          <Svg size="h-3.5 w-3.5" box="0 0 14 14">
            <path d="M2 2l4 5-4 5M8 2l4 5-4 5" stroke="#a8a8a8" strokeWidth="1.8" />
          </Svg>
        </button>
      </div>
    </div>
  );
}

function DocTabs() {
  return (
    <div role="tablist" className="flex h-[29px] shrink-0 border-b-[3px] border-[#3fa3da] bg-[#ededed]">
      {TABS.map((t, i) => (
        <button
          key={t}
          type="button"
          role="tab"
          aria-selected={i === 0}
          className={`border-r border-[#ececec] pr-7 pl-1.5 text-lg leading-6 whitespace-nowrap ${i === 0 ? "bg-[#c1dbfb]" : "bg-[#dcdcdc]"}`}
        >
          {t}
        </button>
      ))}
      <button type="button" aria-label="新建文档" className="flex w-[30px] items-center justify-center bg-[#dcdcdc]">
        <span className="h-4 w-3 border border-[#b5b5b5]" />
      </button>
    </div>
  );
}

/* One ruler mark every 20 units, 85px apart, with ten steps in between. */
const PITCH = 85;

function HorizontalRuler() {
  const zero = 702;
  const marks = [];
  for (let u = -164; u <= 262; u += 2) marks.push(u);
  return (
    <svg className="h-7 min-w-0 flex-1 overflow-hidden font-['Noto_Sans','Noto_Sans_CJK_SC',sans-serif]" aria-label="水平标尺">
      {marks.map((u) => {
        const x = Math.round(zero + (u * PITCH) / 20);
        const len = u % 20 === 0 ? 8 : u % 10 === 0 ? 5 : 2;
        return <rect key={u} x={x} y={25 - len} width="1" height={len} fill="#777" />;
      })}
      {marks.filter((u) => u % 20 === 0 && u < 260).map((u) => (
        <text key={u} x={Math.round(zero + (u * PITCH) / 20)} y="17" textAnchor="middle" fontSize="14" fill="#8a8a8a">
          {Math.abs(u)}
        </text>
      ))}
      <text x="1784" y="17" fontSize="14" fontWeight="700" fill="#8a8a8a">毫米</text>
    </svg>
  );
}

function VerticalRuler() {
  const marks = [];
  for (let u = 238; u <= 408; u += 2) marks.push(u);
  return (
    <svg className="w-7 shrink-0 overflow-hidden font-['Noto_Sans',sans-serif]" height="100%" aria-label="垂直标尺">
      {marks.map((u) => {
        const y = Math.round(10 + ((u - 240) * PITCH) / 20);
        const len = u % 20 === 0 ? 7 : u % 10 === 0 ? 3 : 1;
        return <rect key={u} x={26 - len} y={y} width={len} height="1" fill="#777" />;
      })}
      {marks.filter((u) => u % 20 === 0).map((u) => {
        const y = Math.round(9 + ((u - 240) * PITCH) / 20);
        return (
          <text key={u} x="17" y={y} transform={`rotate(-90 17 ${y})`} textAnchor="middle" fontSize="14" fill="#8a8a8a">
            {u}
          </text>
        );
      })}
    </svg>
  );
}

function Page() {
  const xs = [379, 911, 1445];
  const ys = [115, 398, 682];
  return (
    <svg className="h-full w-full" aria-label="绘图页面">
      <path d="M391 127H1436M391 673H1436" stroke="#5a5a5a" strokeWidth="2" />
      <path d="M392 127V673M1436 127V673" stroke="#a0a0a0" strokeWidth="2" />
      {[391, 1435].map((x) => [127, 673].map((y) => (
        <rect key={`${x}-${y}`} x={x - 3} y={y - 3} width="4" height="4" fill="#fff" stroke="#222" strokeWidth="2" />
      )))}
      {xs.map((x, i) => ys.map((y, j) => (i === 1 && j === 1 ? null : (
        <rect key={`${x}-${y}`} x={x - 5} y={y - 5} width="11" height="11" fill="#000" />
      ))))}
      <path d="M908 396l9 8M917 396l-9 8" stroke="#000" strokeWidth="2.6" />
    </svg>
  );
}

function Workspace() {
  return (
    <main className="flex min-h-0 min-w-0 flex-1 flex-col bg-[#f8f8f8]">
      {PALETTES.map((p, i) => (
        <PaletteRow key={i} palette={p} />
      ))}
      <DocTabs />
      <div className="flex h-7 shrink-0">
        <div className="flex w-[29px] shrink-0 items-end justify-center pb-1">
          <Svg size="h-4 w-4" box="0 0 16 16">
            <path d="M0 4h16M4 0v16" stroke="#222" strokeWidth="1.5" strokeDasharray="3 2" />
            <path d="M7 7l6 6M14 8v6H8" stroke="#222" strokeWidth="1.8" />
          </Svg>
        </div>
        <HorizontalRuler />
      </div>
      <div className="flex min-h-0 flex-1">
        <VerticalRuler />
        <div className="relative min-w-0 flex-1 border-t border-l border-[#888] bg-white">
          <Page />
          <div className="absolute top-0 right-0 h-full w-[13px] bg-white">
            <button type="button" aria-label="向上滚动" className="flex h-6 w-full items-center justify-end overflow-hidden bg-[#ededed]">
              <Svg size="h-3 w-2" box="0 0 8 12">
                <path d="M0 10l8-8v8l-3-3z" fill="#333" />
              </Svg>
            </button>
          </div>
          <div className="absolute right-0 bottom-0 flex h-[150px] w-[13px] flex-col items-end justify-center gap-0.5 rounded-tl border-t border-l border-[#888] bg-[#ececee] pt-2">
            <span className="h-0.5 w-2 bg-[#555]" />
            <span className="h-0.5 w-2 bg-[#555]" />
            <span className="h-0.5 w-2 bg-[#555]" />
          </div>
          <div className="absolute right-[33px] bottom-[18px] flex h-[107px] w-[214px] flex-col items-center justify-center rounded-lg border-2 border-[#1fa58c] bg-white shadow-[2px_6px_14px_rgba(0,0,0,0.35)]">
            <span className="font-['Noto_Sans_CJK_SC',sans-serif] text-[31px] leading-9 font-light text-[#f335cf]">创意视觉设计</span>
            <span className="font-['Inter',sans-serif] text-[31px] leading-9 font-semibold text-[#f72bc4]">fvatm0525</span>
          </div>
        </div>
      </div>
    </main>
  );
}

function PlayerBar() {
  return (
    <footer className="flex h-[34px] shrink-0 items-center bg-[#484848] px-5">
      <button type="button" aria-label="暂停" className="flex gap-2">
        <span className="h-4 w-1 bg-[#e4e4e4]" />
        <span className="h-4 w-1 bg-[#e4e4e4]" />
      </button>
      <button type="button" aria-label="小窗播放" className="ml-auto flex">
        <Svg size="h-4 w-4" box="0 0 16 16">
          <path d="M5 1h10v8H5zM1 6h9v9H1z" stroke="#e4e4e4" strokeWidth="2" fill="#484848" />
        </Svg>
      </button>
      <button type="button" aria-label="退出全屏" className="ml-5 flex">
        <Svg size="h-4 w-4" box="0 0 16 16">
          <path d="M1 1l5 5M15 1l-5 5M1 15l5-5M15 15l-5-5" stroke="#e4e4e4" strokeWidth="2.2" />
          <path d="M7 1v6H1zM9 1v6h6zM7 15V9H1zM9 15V9h6z" fill="#e4e4e4" />
        </Svg>
      </button>
    </footer>
  );
}

export default function App() {
  return (
    <div className={`flex h-screen flex-col overflow-hidden bg-[#2b2d31] text-[#222] ${FONT}`}>
      <div className="flex min-h-0 flex-1 px-3">
        <div className="flex w-4 shrink-0 bg-white">
          <div className="relative w-2 shrink-0 overflow-hidden text-[17px] leading-6">
            <span className="absolute top-[136px] right-0">位</span>
            <span className="absolute top-[514px] right-0">C</span>
            <span className="absolute top-[618px] right-0">F:</span>
            <span className="absolute top-[652px] right-0">G</span>
            <span className="absolute top-[682px] h-[34px] w-2 border-t border-[#ccc] bg-[#eee]" />
          </div>
          <div className="mt-[41px] w-px bg-[#b0b0b0]" />
        </div>
        <div className="flex min-w-0 flex-1 flex-col bg-white">
          <div className="relative -mb-0.5 ml-8 h-0.5 shrink-0 bg-[repeating-linear-gradient(90deg,#999_0px_5px,#fff_5px_84px,#6f9350_84px_100px,#fff_100px_113px,#999_113px_171px)]" />
          <TitleBar />
          <MenuBar />
          <StandardBar />
          <PropertyBar />
          <div className="flex min-h-0 flex-1">
            <Toolbox />
            <Workspace />
          </div>
        </div>
      </div>
      <PlayerBar />
    </div>
  );
}
